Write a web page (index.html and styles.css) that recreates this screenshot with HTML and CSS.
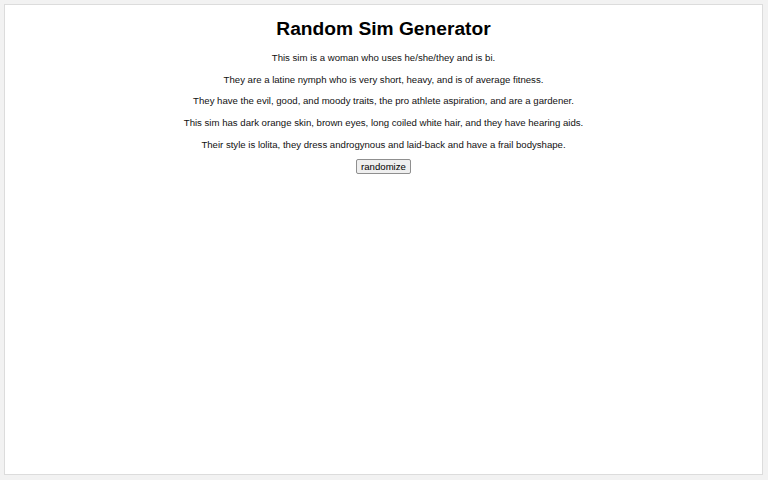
FILE: index.html
```html
<!DOCTYPE html>
<html lang="en">
<head>
<meta charset="utf-8">
<title>Random Sim Generator</title>
<link rel="stylesheet" href="styles.css">
</head>
<body>
<main class="card">
  <h1 class="title">Random Sim Generator</h1>
  <p class="line">This sim is a woman who uses he/she/they and is bi.</p>
  <p class="line">They are a latine nymph who is very short, heavy, and is of average fitness.</p>
  <p class="line">They have the evil, good, and moody traits, the pro athlete aspiration, and are a gardener.</p>
  <p class="line">This sim has dark orange skin, brown eyes, long coiled white hair, and they have hearing aids.</p>
  <p class="line">Their style is lolita, they dress androgynous and laid-back and have a frail bodyshape.</p>
  <button class="randomize" type="button">randomize</button>
</main>
</body>
</html>
```
FILE: styles.css
```css
html, body {
  margin: 0;
  height: 100%;
}

body {
  box-sizing: border-box;
  padding: 4px 5px 5px 4px;
  background: #f2f2f2;
  font-family: "Liberation Sans", Arial, sans-serif;
  color: #111;
}

.card {
  box-sizing: border-box;
  height: 100%;
  background: #fff;
  border: 1px solid #dcdcdc;
  padding-top: 13.4px;
  display: flex;
  flex-direction: column;
  align-items: center;
  text-align: center;
}

.title {
  margin: 0 0 6.5px;
  font-size: 19.2px;
  line-height: 22px;
  font-weight: bold;
  color: #000;
}

.line {
  margin: 0;
  font-size: 9.6px;
  line-height: 21.75px;
}

.randomize {
  margin-top: 3.6px;
  font-family: "Liberation Sans", Arial, sans-serif;
  font-size: 9.6px;
  line-height: 11px;
  padding: 1px 4px;
  color: #000;
  background: #efefef;
  border: 1px solid #8f8f8f;
  border-radius: 2px;
}
```
